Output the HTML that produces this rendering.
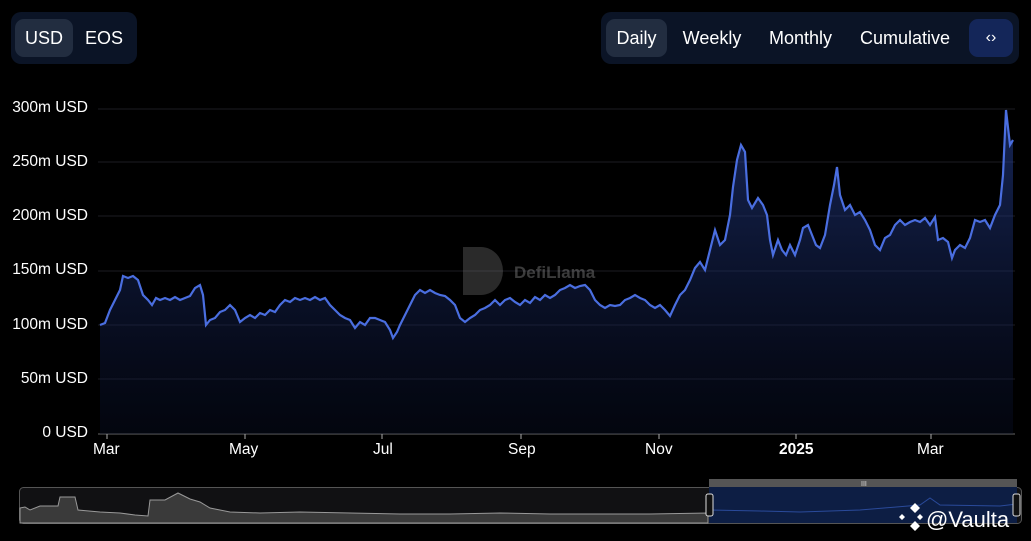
<!DOCTYPE html>
<html><head><style>
body{margin:0;width:1031px;height:541px;background:#000;overflow:hidden;font-family:"Liberation Sans",sans-serif;position:relative}
.grp{position:absolute;background:#0b1426;border-radius:10px}
.b{position:absolute;color:#fff;font-size:18px;top:7px;height:38px;line-height:38px;border-radius:9px;text-align:center}
.sel{background:#222d40}
.ax{position:absolute;color:#fff;font-size:15.5px}
</style></head><body>
<div class="grp" style="left:11px;top:12px;width:126px;height:52px">
<div class="b sel" style="left:4px;width:58px">USD</div><div class="b" style="left:70px;width:46px">EOS</div></div>
<div class="grp" style="left:601px;top:12px;width:418px;height:52px">
<div class="b sel" style="left:5px;width:61px">Daily</div>
<div class="b" style="left:76px;width:70px">Weekly</div>
<div class="b" style="left:162px;width:75px">Monthly</div>
<div class="b" style="left:254px;width:100px">Cumulative</div>
<div class="b" style="left:368px;width:44px;background:#142659;font-size:16px">&lsaquo;&rsaquo;</div></div>
<div class="ax" style="right:943px;top:99px">300m USD</div>
<div class="ax" style="right:943px;top:153px">250m USD</div>
<div class="ax" style="right:943px;top:207px">200m USD</div>
<div class="ax" style="right:943px;top:261px">150m USD</div>
<div class="ax" style="right:943px;top:316px">100m USD</div>
<div class="ax" style="right:943px;top:370px">50m USD</div>
<div class="ax" style="right:943px;top:424px">0 USD</div>
<div class="ax" style="left:93px;top:441px">Mar</div>
<div class="ax" style="left:229px;top:441px">May</div>
<div class="ax" style="left:373px;top:441px">Jul</div>
<div class="ax" style="left:508px;top:441px">Sep</div>
<div class="ax" style="left:645px;top:441px">Nov</div>
<div class="ax" style="left:779px;top:441px;font-weight:bold">2025</div>
<div class="ax" style="left:917px;top:441px">Mar</div>
<svg width="1031" height="541" style="position:absolute;left:0;top:0">
<defs><linearGradient id="g" x1="0" y1="0" x2="0" y2="1"><stop offset="0" stop-color="#2a46a0" stop-opacity=".55"/><stop offset="1" stop-color="#0a1230" stop-opacity=".3"/></linearGradient></defs>
<g stroke="#1c1c22" stroke-width="1">
<line x1="98" y1="109" x2="1015" y2="109"/><line x1="98" y1="162" x2="1015" y2="162"/><line x1="98" y1="216" x2="1015" y2="216"/><line x1="98" y1="271" x2="1015" y2="271"/><line x1="98" y1="325" x2="1015" y2="325"/><line x1="98" y1="379" x2="1015" y2="379"/></g>
<line x1="98" y1="434" x2="1015" y2="434" stroke="#666"/>
<g stroke="#aaa"><line x1="107" y1="434" x2="107" y2="439"/><line x1="245" y1="434" x2="245" y2="439"/><line x1="382" y1="434" x2="382" y2="439"/><line x1="521" y1="434" x2="521" y2="439"/><line x1="659" y1="434" x2="659" y2="439"/><line x1="796" y1="434" x2="796" y2="439"/><line x1="931" y1="434" x2="931" y2="439"/></g>
<g opacity=".35"><path d="M463 247h18a22 24 0 0 1 0 48h-18z" fill="#777"/><text x="514" y="278" fill="#aaa" font-size="17" font-weight="bold">DefiLlama</text></g>
<path d="M100 434L100 325L105 323L110 310L115 300L120 290L123 276L128 278L133 276L138 280L143 295L148 300L152 305L156 298L160 300L165 298L170 300L175 297L180 300L185 298L190 296L195 288L200 285L203 295L206 325L210 320L215 318L220 312L225 310L230 305L235 310L240 322L245 318L250 315L255 318L260 313L265 315L270 310L275 312L280 305L285 300L290 302L295 298L300 300L305 298L310 300L315 297L320 300L325 298L330 305L335 310L340 315L345 318L350 320L355 328L360 322L365 325L370 318L375 318L380 320L385 322L390 330L393 338L397 332L400 325L405 315L410 305L415 295L420 290L425 293L430 290L435 293L440 295L445 296L450 300L455 305L460 318L465 322L470 318L475 315L480 310L485 308L490 305L495 300L500 305L505 300L510 298L515 302L520 305L525 300L530 303L535 297L540 300L545 295L550 298L555 295L560 290L565 288L570 285L575 288L580 286L585 285L590 290L595 300L600 305L605 308L610 305L615 306L620 305L625 300L630 298L635 295L640 298L645 300L650 305L655 308L660 305L665 310L670 316L675 305L680 295L685 290L690 280L695 268L700 262L705 270L710 250L715 230L720 245L725 240L730 215L733 187L737 160L741 145L745 152L748 200L752 208L758 198L763 205L767 215L770 240L773 255L778 240L782 250L786 255L790 245L795 255L800 240L803 228L808 225L812 235L816 245L820 248L825 235L830 205L834 185L837 167L840 195L845 210L850 205L855 215L860 212L865 220L870 230L875 245L880 250L885 238L890 235L895 225L900 220L905 225L910 222L915 220L920 222L925 218L930 225L935 217L938 240L943 238L948 242L952 258L955 250L960 245L965 248L970 238L975 220L980 222L985 220L990 228L995 215L1000 205L1003 175L1006 110L1010 145L1013 140L1013 434Z" fill="url(#g)"/>
<path d="M100 325L105 323L110 310L115 300L120 290L123 276L128 278L133 276L138 280L143 295L148 300L152 305L156 298L160 300L165 298L170 300L175 297L180 300L185 298L190 296L195 288L200 285L203 295L206 325L210 320L215 318L220 312L225 310L230 305L235 310L240 322L245 318L250 315L255 318L260 313L265 315L270 310L275 312L280 305L285 300L290 302L295 298L300 300L305 298L310 300L315 297L320 300L325 298L330 305L335 310L340 315L345 318L350 320L355 328L360 322L365 325L370 318L375 318L380 320L385 322L390 330L393 338L397 332L400 325L405 315L410 305L415 295L420 290L425 293L430 290L435 293L440 295L445 296L450 300L455 305L460 318L465 322L470 318L475 315L480 310L485 308L490 305L495 300L500 305L505 300L510 298L515 302L520 305L525 300L530 303L535 297L540 300L545 295L550 298L555 295L560 290L565 288L570 285L575 288L580 286L585 285L590 290L595 300L600 305L605 308L610 305L615 306L620 305L625 300L630 298L635 295L640 298L645 300L650 305L655 308L660 305L665 310L670 316L675 305L680 295L685 290L690 280L695 268L700 262L705 270L710 250L715 230L720 245L725 240L730 215L733 187L737 160L741 145L745 152L748 200L752 208L758 198L763 205L767 215L770 240L773 255L778 240L782 250L786 255L790 245L795 255L800 240L803 228L808 225L812 235L816 245L820 248L825 235L830 205L834 185L837 167L840 195L845 210L850 205L855 215L860 212L865 220L870 230L875 245L880 250L885 238L890 235L895 225L900 220L905 225L910 222L915 220L920 222L925 218L930 225L935 217L938 240L943 238L948 242L952 258L955 250L960 245L965 248L970 238L975 220L980 222L985 220L990 228L995 215L1000 205L1003 175L1006 110L1010 145L1013 140" fill="none" stroke="#4a6ee0" stroke-width="2.2"/>
<rect x="19.5" y="487.5" width="1002" height="36" rx="4" fill="#111113" stroke="#555"/>
<path d="M20 508L25 507L30 510L40 506L58 506L60 497L75 497L78 510L100 512L120 513L135 515L148 516L150 500L165 500L178 493L190 499L200 502L210 508L230 512L260 513L300 512L350 513L400 514L450 514L500 513L550 514L600 514L650 514L708 513L708 523L20 523Z" fill="#3a3a3a" stroke="#999" stroke-width="1"/>
<rect x="709" y="487" width="308" height="36" fill="#0d1e44"/>
<path d="M710 510L760 511L800 512L860 510L920 505L930 498L940 505L1000 506L1017 504" fill="none" stroke="#2a4a9a"/>
<rect x="709" y="479" width="308" height="8" fill="#555"/>
<text x="861" y="486" fill="#ddd" font-size="7">III</text>
<rect x="706" y="494" width="7" height="22" rx="2" fill="#111" stroke="#ddd"/>
<rect x="1013" y="494" width="7" height="22" rx="2" fill="#111" stroke="#ddd"/>
<g fill="#fff"><path d="M910 508l5-5 5 5-5 5z M899 517l3-3 3 3-3 3z M917 517l3-3 3 3-3 3z M910 526l5-5 5 5-5 5z" /></g>
<text x="926" y="527" fill="#fff" font-size="22">@Vaulta</text>
</svg>
</body></html>
